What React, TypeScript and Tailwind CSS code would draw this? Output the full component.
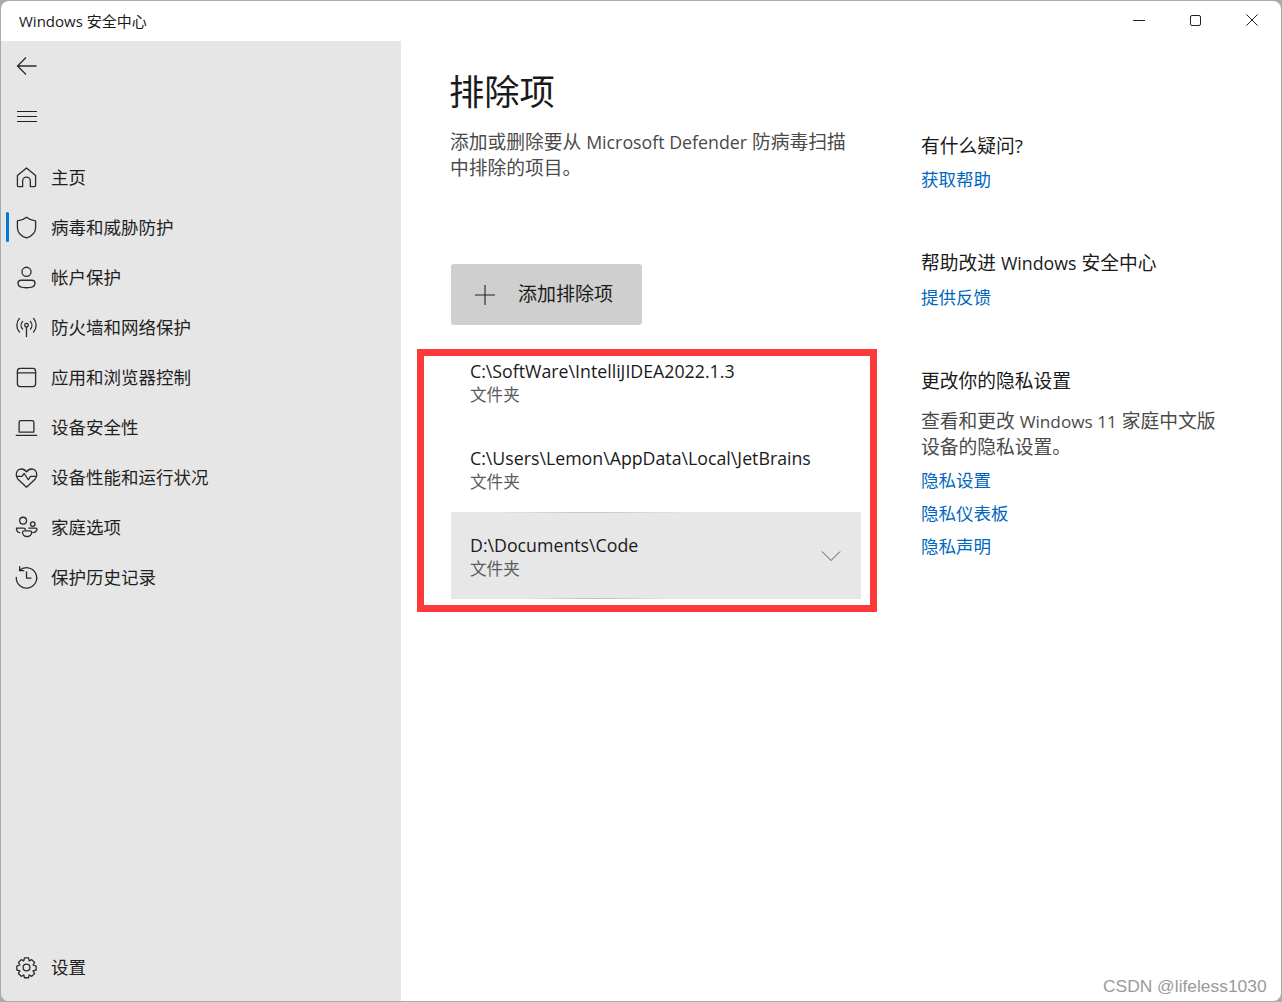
import type { ReactNode } from "react";

const font = { fontFamily: '"Open Sans", "Noto Sans CJK SC", sans-serif' };

const Ico = ({ children }: { children: ReactNode }) => (
  <svg width="25" height="25" viewBox="0 0 22 22" fill="none" stroke="#2b2b2b" strokeWidth="1.15" strokeLinecap="round" strokeLinejoin="round">
    {children}
  </svg>
);

const navItems: { label: string; active?: boolean; icon: ReactNode }[] = [
  { label: "主页", icon: <path d="M3 18V9.2L11 2.6l8 6.6V18a1 1 0 0 1-1 1h-3.6v-5a3.4 3.4 0 0 0-6.8 0v5H4a1 1 0 0 1-1-1z" /> },
  { label: "病毒和威胁防护", active: true, icon: <path d="M11 2c2.4 2 5 3 8 3.2V11c0 4.6-3 7.6-8 9.2-5-1.6-8-4.6-8-9.2V5.2C6 5 8.6 4 11 2z" /> },
  {
    label: "帐户保护",
    icon: (
      <>
        <circle cx="11" cy="6" r="4" />
        <path d="M3.5 16c0-1.6 1.2-2.6 2.8-2.6h9.4c1.6 0 2.8 1 2.8 2.6 0 2.6-3.2 4-7.5 4s-7.5-1.4-7.5-4z" />
      </>
    ),
  },
  {
    label: "防火墙和网络保护",
    icon: (
      <>
        <circle cx="11" cy="9" r="1.6" />
        <path d="M11 10.6V19M7.6 12.4a5 5 0 0 1 0-6.8M14.4 5.6a5 5 0 0 1 0 6.8M4.8 15a9 9 0 0 1 0-12M17.2 3a9 9 0 0 1 0 12" />
      </>
    ),
  },
  {
    label: "应用和浏览器控制",
    icon: (
      <>
        <rect x="3" y="3" width="16" height="16" rx="2.5" />
        <path d="M3 7h16" />
      </>
    ),
  },
  {
    label: "设备安全性",
    icon: (
      <>
        <path d="M4.5 15V6.5A1.5 1.5 0 0 1 6 5h10a1.5 1.5 0 0 1 1.500 1.500V15z" />
        <path d="M2 18h18" />
      </>
    ),
  },
  { label: "设备性能和运行状况", icon: <path d="M3.500 12.500C2.500 11.300 2 10 2 8.500 2 5.500 4 3.500 6.500 3.500c1.800 0 3.400 1 4.500 2.600 1.100-1.600 2.700-2.600 4.500-2.600C18 3.500 20 5.500 20 8.500c0 1.500-.5 2.800-1.500 4L11 19.500zM2.500 10H7l2-2.500 3.500 5.500 2-3h5" /> },
  {
    label: "家庭选项",
    icon: (
      <>
        <circle cx="8" cy="5" r="3" />
        <circle cx="16.500" cy="8" r="2" />
        <path d="M2 11.500h6.500c.8 0 1.500.6 1.500 1.400M3 11.500C1.500 13 2.500 15 5 15.500M13 11.500h6c1 0 1.500 1 1 2-.6 1.200-2 2-3.500 2" />
        <path d="M7.500 15.500c0-1 .8-1.500 1.500-1.500h5c.8 0 1.500.5 1.500 1.500 0 2-1.800 3.500-4 3.500s-4-1.500-4-3.500z" />
      </>
    ),
  },
  {
    label: "保护历史记录",
    icon: (
      <>
        <path d="M4.800 4.800A9 9 0 1 1 2 11M5 1.500v3.500h3.500" />
        <path d="M11 6v5.500h4" />
      </>
    ),
  },
];

const NavRow = ({ label, icon, active }: { label: string; icon: ReactNode; active?: boolean }) => (
  <div className="relative flex h-[50px] items-center pl-[13px]">
    {active && <div className="absolute left-[5px] top-[10px] h-[30px] w-[3px] rounded-full bg-[#0078d4]" />}
    {icon}
    <span className="ml-[12px] text-[17.5px] text-[#1f1f1f]">{label}</span>
  </div>
);

const Exclusion = ({ path, selected }: { path: string; selected?: boolean }) => (
  <div className={`relative flex h-[87px] w-[410px] items-center justify-between pl-[19px] pr-[20px] pt-[2px] ${selected ? "bg-[#e7e7e7]" : ""}`}>
    {selected && (
      <>
        <div className="absolute left-[40px] top-0 h-px w-[200px] bg-gradient-to-r from-transparent via-[#c4c4c4] to-transparent" />
        <div className="absolute bottom-0 left-[70px] h-px w-[150px] bg-gradient-to-r from-transparent via-[#bdbdbd] to-transparent" />
      </>
    )}
    <div className="flex flex-col">
      <span className="text-[17.75px] leading-[24px] text-[#1a1a1a]">{path}</span>
      <span className="text-[16.600px] leading-[24px] text-[#5c5c5c]">文件夹</span>
    </div>
    {selected && (
      <svg width="20" height="12" viewBox="0 0 20 12" fill="none" stroke="#555" strokeWidth="1" className="mt-[-2px]">
        <path d="M1 1.500l9 9 9-9" />
      </svg>
    )}
  </div>
);

const HelpLink = ({ children }: { children: ReactNode }) => (
  <a className="block text-[17.500px] leading-[33px] text-[#0067c0]">{children}</a>
);

const Latin = ({ children }: { children: ReactNode }) => <span className="text-[17.800px]">{children}</span>;

export default function App() {
  return (
    <div className="relative h-[1002px] w-[1282px] overflow-hidden bg-[#a9abad] pl-px pt-px" style={font}>
      <div className="flex h-[1000px] w-[1280px] flex-col overflow-hidden rounded-[8px] bg-white">
        {/* title bar */}
        <div className="flex h-[40px] shrink-0 items-center justify-between pl-[18px]">
          <span className="text-[15px] text-[#1a1a1a]">Windows 安全中心</span>
          <div className="flex items-center pb-[2px]">
            <div className="flex w-[57px] justify-center">
              <div className="h-px w-[12px] bg-[#222]" />
            </div>
            <div className="flex w-[57px] justify-center">
              <div className="h-[11px] w-[11px] rounded-[2px] border border-[#222]" />
            </div>
            <div className="flex w-[57px] justify-center pr-[1px]">
              <svg width="12" height="12" viewBox="0 0 12 12" stroke="#222" strokeWidth="1">
                <path d="M.5.5l11 11M11.500.5l-11 11" />
              </svg>
            </div>
          </div>
        </div>

        <div className="flex min-h-0 flex-1">
          {/* sidebar */}
          <aside className="flex w-[400px] shrink-0 flex-col bg-[#e6e6e6]">
            <div className="flex h-[50px] items-center pl-[15px]">
              <svg width="22" height="22" viewBox="0 0 22 22" fill="none" stroke="#2b2b2b" strokeWidth="1.3">
                <path d="M1.500 11H20.500M10 2.500L1.500 11l8.500 8.500" />
              </svg>
            </div>
            <div className="flex h-[50px] items-center pl-[16px]">
              <div className="flex w-[20px] flex-col gap-[4px]">
                <div className="h-px bg-[#222]" />
                <div className="h-px bg-[#222]" />
                <div className="h-px bg-[#222]" />
              </div>
            </div>
            <nav className="mt-[11px] flex flex-col">
              {navItems.map((n) => (
                <NavRow key={n.label} label={n.label} icon={<Ico>{n.icon}</Ico>} active={n.active} />
              ))}
            </nav>
            <div className="mt-auto mb-[9px]">
              <NavRow
                label="设置"
                icon={
                  <Ico>
                    <circle cx="11" cy="11" r="3" />
                    <path d="M9.200 2.500h3.600l.6 2.600 2.200-1 2.500 2.500-1.300 2.200 2.700.9v3.500l-2.700.8 1.300 2.300-2.500 2.500-2.200-1.200-.6 2.400H9.200l-.6-2.400-2.200 1.200-2.500-2.500 1.300-2.300-2.700-.8v-3.500l2.700-.9-1.300-2.200 2.500-2.500 2.200 1z" />
                  </Ico>
                }
              />
            </div>
          </aside>

          {/* content */}
          <main className="flex flex-1 pl-[50px]">
            <div className="flex w-[470px] shrink-0 flex-col">
              <h1 className="ml-[-2px] mt-[23px] text-[35.300px] leading-[54px] font-normal text-[#1a1a1a]">排除项</h1>
              <p className="ml-[-1px] mt-[11px] w-[410px] text-[18.750px] leading-[25px] text-[#4a4a4a]">
                添加或删除要从 <Latin>Microsoft Defender</Latin> 防病毒扫描中排除的项目。
              </p>
              <button className="mt-[84px] flex h-[61px] w-[191px] items-center rounded-[3px] bg-[#cfcfcf] pb-[-1px] pl-[23px]">
                <svg width="22" height="22" viewBox="0 0 22 22" stroke="#222" strokeWidth="1.1">
                  <path d="M1 11H21M11 1V21" />
                </svg>
                <span className="ml-[22px] text-[19px] text-[#1a1a1a]">添加排除项</span>
              </button>
              <div className="relative mt-[13px]">
                <Exclusion path="C:\SoftWare\IntelliJIDEA2022.1.3" />
                <Exclusion path="C:\Users\Lemon\AppData\Local\JetBrains" />
                <Exclusion path="D:\Documents\Code" selected />
                {/* red annotation */}
                <div className="absolute left-[-34px] top-[11px] h-[263px] w-[460px] border-[7px] border-[#fd3a3a]" />
              </div>
            </div>

            <div className="flex flex-col pt-[91px]">
              <h2 className="text-[18.750px] leading-[28px] font-normal text-[#1a1a1a]">有什么疑问?</h2>
              <div className="mt-[3px]">
                <HelpLink>获取帮助</HelpLink>
              </div>
              <h2 className="mt-[53px] text-[18.750px] leading-[28px] font-normal text-[#1a1a1a]">
                帮助改进 <Latin>Windows</Latin> 安全中心
              </h2>
              <div className="mt-[4px]">
                <HelpLink>提供反馈</HelpLink>
              </div>
              <h2 className="mt-[53px] text-[18.750px] leading-[28px] font-normal text-[#1a1a1a]">更改你的隐私设置</h2>
              <p className="mt-[13px] w-[300px] text-[18.750px] leading-[25px] text-[#4a4a4a]">
                查看和更改 <span className="text-[17.200px]">Windows 11</span> 家庭中文版设备的隐私设置。
              </p>
              <div className="mt-[5px]">
                <HelpLink>隐私设置</HelpLink>
                <HelpLink>隐私仪表板</HelpLink>
                <HelpLink>隐私声明</HelpLink>
              </div>
            </div>
          </main>
        </div>
      </div>
      {/* watermark */}
      <span className="absolute left-[1103px] top-[973px] text-[17.400px] text-[#9a9a9a]" style={{ fontFamily: '"Liberation Sans", sans-serif' }}>
        CSDN @lifeless1030
      </span>
    </div>
  );
}
